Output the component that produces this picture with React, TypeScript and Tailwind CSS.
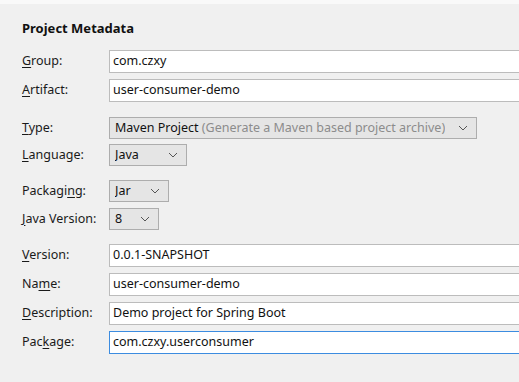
import React from 'react';

const font = { fontFamily: '"Noto Sans", "Open Sans", sans-serif' };

function Label({ text, u }: { text: string; u: number }) {
    // u = index of the mnemonic letter that is underlined
    return (
        <span className="w-[87px] shrink-0 text-[12.5px] text-[#1a1a1a]">
            {text.slice(0, u)}
            <span className="underline underline-offset-2">{text[u]}</span>
            {text.slice(u + 1)}
        </span>
    );
}

function Chevron() {
    return (
        <svg width="10" height="6" viewBox="0 0 10 6" className="shrink-0">
            <path d="M1 1 L5 5 L9 1" fill="none" stroke="#555" strokeWidth="1" />
        </svg>
    );
}

function TextRow({ label, u, value, focused }: { label: string; u: number; value: string; focused?: boolean }) {
    return (
        <div className="flex items-center">
            <Label text={label} u={u} />
            <div
                className={`flex h-[23px] w-[430px] shrink-0 items-center border bg-white pl-[3px] text-[12.5px] text-[#111] ${
                    focused ? 'border-[#3c8ce0]' : 'border-[#bcbcbc]'
                }`}
            >
                {value}
            </div>
        </div>
    );
}

function SelectRow({ label, u, value, width, hint }: { label: string; u: number; value: string; width: string; hint?: string }) {
    return (
        <div className="flex items-center">
            <Label text={label} u={u} />
            <div className={`flex h-[22px] ${width} shrink-0 items-center justify-between gap-2 border border-[#adadad] bg-[#e5e5e5] pl-[5px] pr-[8px] text-[12.5px] text-[#111]`}>
                <span className="overflow-hidden whitespace-nowrap">
                    {value}
                    {hint && <span className="text-[#8c8c8c]"> {hint}</span>}
                </span>
                <Chevron />
            </div>
        </div>
    );
}

export default function App() {
    return (
        <div className="h-[382px] w-[519px] overflow-hidden bg-[#f0f0f0]" style={font}>
            <div className="h-[4px] bg-[#f9f9f9]" />
            <div className="pl-[22px] pt-[15px]">
                <h2 className="text-[13px] font-bold leading-[18px] text-[#111]">Project Metadata</h2>

                <div className="mt-[13px] flex flex-col gap-[6px]">
                    <TextRow label="Group:" u={0} value="com.czxy" />
                    <TextRow label="Artifact:" u={0} value="user-consumer-demo" />
                </div>

                <div className="mt-[15px] flex flex-col gap-[5px]">
                    <SelectRow label="Type:" u={0} value="Maven Project" hint="(Generate a Maven based project archive)" width="w-[368px]" />
                    <SelectRow label="Language:" u={0} value="Java" width="w-[78px]" />
                </div>

                <div className="mt-[14px] flex flex-col gap-[6px]">
                    <SelectRow label="Packaging:" u={7} value="Jar" width="w-[60px]" />
                    <SelectRow label="Java Version:" u={0} value="8" width="w-[50px]" />
                </div>

                <div className="mt-[14px] flex flex-col gap-[6px]">
                    <TextRow label="Version:" u={0} value="0.0.1-SNAPSHOT" />
                    <TextRow label="Name:" u={2} value="user-consumer-demo" />
                    <TextRow label="Description:" u={0} value="Demo project for Spring Boot" />
                    <TextRow label="Package:" u={3} value="com.czxy.userconsumer" focused />
                </div>
            </div>
        </div>
    );
}
